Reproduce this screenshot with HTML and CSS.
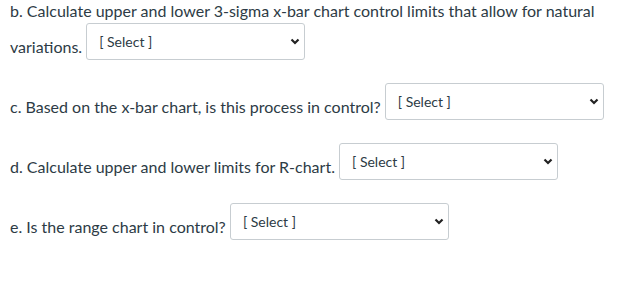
FILE: index.html
```html
<!DOCTYPE html>
<html lang="en">
<head>
  <meta charset="UTF-8">
  <meta name="viewport" content="width=device-width, initial-scale=1.0">
  <link rel="stylesheet" href="styles.css">
  <title>Control Charts Quiz</title>
</head>
<body>

  <div class="quiz">
    <p class="question">b. Calculate upper and lower 3-sigma x-bar chart control limits that allow for natural variations.
      <span class="select-wrap">
        <select class="answer"><option>[ Select ]</option></select>
        <svg class="chevron" width="10" height="7" viewBox="0 0 10 7"><path d="M1.5 1.5 L5 5 L8.5 1.5" fill="none" stroke="#222" stroke-width="2.2"/></svg>
      </span>
    </p>

    <p class="question">c. Based on the x-bar chart, is this process in control?
      <span class="select-wrap">
        <select class="answer"><option>[ Select ]</option></select>
        <svg class="chevron" width="10" height="7" viewBox="0 0 10 7"><path d="M1.5 1.5 L5 5 L8.5 1.5" fill="none" stroke="#222" stroke-width="2.2"/></svg>
      </span>
    </p>

    <p class="question">d. Calculate upper and lower limits for R-chart.
      <span class="select-wrap">
        <select class="answer"><option>[ Select ]</option></select>
        <svg class="chevron" width="10" height="7" viewBox="0 0 10 7"><path d="M1.5 1.5 L5 5 L8.5 1.5" fill="none" stroke="#222" stroke-width="2.2"/></svg>
      </span>
    </p>

    <p class="question">e. Is the range chart in control?
      <span class="select-wrap">
        <select class="answer"><option>[ Select ]</option></select>
        <svg class="chevron" width="10" height="7" viewBox="0 0 10 7"><path d="M1.5 1.5 L5 5 L8.5 1.5" fill="none" stroke="#222" stroke-width="2.2"/></svg>
      </span>
    </p>
  </div>

</body>
</html>
```

FILE: styles.css
```css
body {
  font-family: 'Lato', 'Liberation Sans', sans-serif;
  background: #fff;
  color: #2d3b45;
  margin: 0;
}

.quiz {
  padding: 0 10px;
  margin-top: -1px;
}

.question {
  font-size: 16px;
  line-height: 24px;
  margin: 0 0 9px;
}

.select-wrap {
  position: relative;
  display: inline-block;
  vertical-align: middle;
  margin-bottom: 14px;
}

.answer {
  appearance: none;
  -webkit-appearance: none;
  width: 219px;
  height: 37px;
  padding: 0 12px;
  font-family: 'Lato', 'Liberation Sans', sans-serif;
  font-size: 14px;
  color: #2d3b45;
  background: #fff;
  border: 1px solid #c7cdd1;
  border-radius: 3px;
  display: block;
}

.chevron {
  position: absolute;
  right: 5px;
  top: 15px;
}
```
